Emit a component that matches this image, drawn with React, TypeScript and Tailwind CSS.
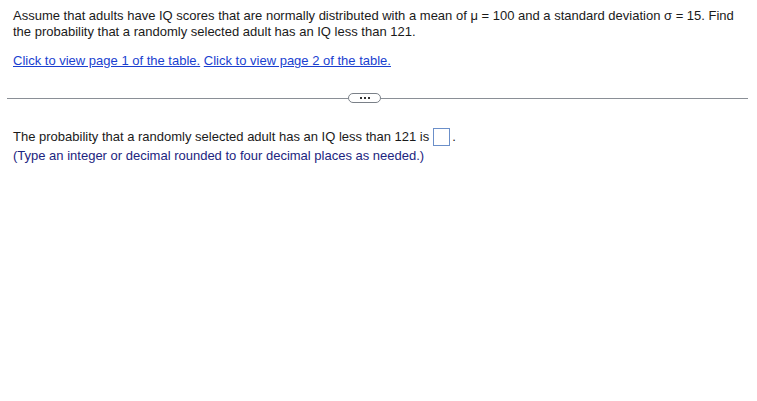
import React from 'react';

export default function App() {
  return (
    <div className="w-[757px] h-[401px] bg-white font-['Liberation_Sans',Arial,sans-serif] text-[13px] text-[#1a1a1a]">
      <div className="px-[13px] pt-[8px]">
        <p className="leading-[16px]">
          Assume that adults have IQ scores that are normally distributed with a mean of μ = 100 and a standard deviation σ = 15. Find
          <br />
          the probability that a randomly selected adult has an IQ less than 121.
        </p>
        <p className="mt-[13px] leading-[16px]">
          <a href="#" className="text-[#1a3fd0] underline">Click to view page 1 of the table.</a>{' '}
          <a href="#" className="text-[#1a3fd0] underline">Click to view page 2 of the table.</a>
        </p>
      </div>

      <div className="mt-[24px] flex items-center pl-[7px] pr-[9px]">
        <div className="w-[341px] h-px bg-[#8a8f96]" />
        <div className="w-[33px] h-[10px] rounded-full border border-[#7a8088] flex items-center justify-center gap-[2px]">
          <span className="w-[2px] h-[2px] bg-[#333]" />
          <span className="w-[2px] h-[2px] bg-[#333]" />
          <span className="w-[2px] h-[2px] bg-[#333]" />
        </div>
        <div className="flex-1 h-px bg-[#8a8f96]" />
      </div>

      <div className="px-[13px] mt-[24px]">
        <p className="leading-[19px] flex items-center">
          The probability that a randomly selected adult has an IQ less than 121 is
          <span className="inline-block w-[17px] h-[18px] border border-[#6b8fc9] ml-[4px] mr-[2px]" />.
        </p>
        <p className="leading-[19px] text-[#1c2580]">
          (Type an integer or decimal rounded to four decimal places as needed.)
        </p>
      </div>
    </div>
  );
}
